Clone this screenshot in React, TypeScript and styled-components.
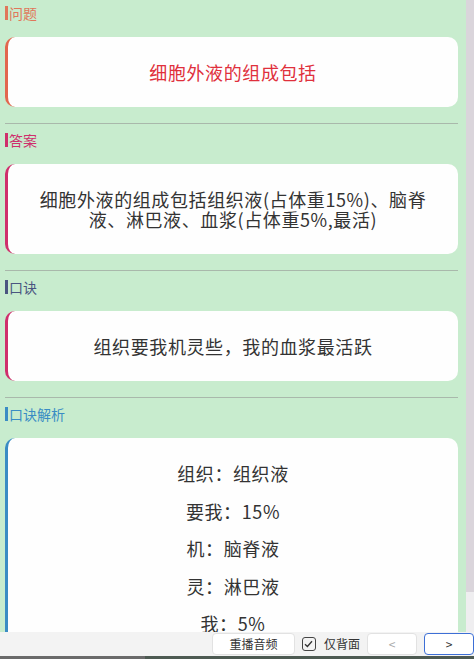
import React from 'react'
import styled, { createGlobalStyle } from 'styled-components'

const GlobalStyle = createGlobalStyle`
  html, body {
    margin: 0;
    padding: 0;
    height: 100%;
    overflow: hidden;
  }
  body {
    font-family: "Noto Sans CJK SC", "Noto Sans", sans-serif;
  }
`

const Page = styled.div`
  display: flex;
  flex-direction: column;
  width: 474px;
  height: 659px;
  background: #c8ecce;
`

const Viewport = styled.div`
  flex: 1;
  min-height: 0;
  display: flex;
`

const Scroller = styled.div`
  flex: 1;
  min-width: 0;
  overflow: hidden;
  padding-top: 3px;
`

const ScrollTrack = styled.div`
  width: 8px;
  background: #efeef0;
  display: flex;
  flex-direction: column;
`

const ScrollThumb = styled.div<{ $ratio: number }>`
  height: ${(p) => p.$ratio * 100}%;
  background: #dad5db;
`

const Section = styled.section`
  margin: 0 8px 0 5px;
`

const Heading = styled.div<{ $color: string }>`
  height: 20px;
  display: flex;
  align-items: center;
  margin-bottom: 14px;

  span {
    display: inline-block;
    border-left: 3px solid ${(p) => p.$color};
    padding-left: 1px;
    line-height: 14px;
    font-size: 14px;
    color: ${(p) => p.$color};
  }
`

const Card = styled.div<{ $stripe: string; $color?: string }>`
  background: #fefefe;
  border-radius: 10px;
  border-left: 3px solid ${(p) => p.$stripe};
  padding: 25px 30px;
  text-align: center;
  font-size: 18px;
  line-height: 20px;
  color: ${(p) => p.$color || '#333'};
  letter-spacing: 0.6px;
`

const Divider = styled.hr`
  border: none;
  border-top: 1px solid #a9b8ab;
  margin: 16px 0 6px;
`

const Line = styled.p`
  margin: 0 0 17.5px;
  &:last-child {
    margin-bottom: 0;
  }
`

const Toolbar = styled.div`
  flex: none;
  height: 24px;
  background: #f3f3f3;
  display: flex;
  align-items: center;
  justify-content: flex-end;
  gap: 7px;
  font-size: 12px;
  color: #333;
`

const Button = styled.button<{ $focused?: boolean; $w: number; $dim?: boolean }>`
  width: ${(p) => p.$w}px;
  height: 22px;
  background: #fff;
  border: 1px solid ${(p) => (p.$focused ? '#3d6fd6' : '#e2e2e2')};
  border-radius: 4px;
  font-family: "Noto Sans CJK SC", sans-serif;
  font-size: 12px;
  line-height: 20px;
  color: ${(p) => (p.$dim ? '#aaa' : '#333')};
  padding: 0;
`

const Check = styled.label`
  display: flex;
  align-items: center;
  gap: 8px;
  line-height: 16px;

  i {
    width: 12px;
    height: 12px;
    border: 1.5px solid #444;
    border-radius: 3px;
    display: flex;
    align-items: center;
    justify-content: center;
  }
`

const BottomStrip = styled.div`
  flex: none;
  height: 3px;
  background: linear-gradient(90deg, #6a6a6a 0 145px, #4d5a52 145px);
`

const App: React.FC = () => {
  return (
    <>
      <GlobalStyle />
      <Page>
        <Viewport>
          <Scroller>
            <Section>
              <Heading $color="#e0775a"><span>问题</span></Heading>
              <Card $stripe="#e2674e" $color="#e0303c">细胞外液的组成包括</Card>
              <Divider />
            </Section>
            <Section>
              <Heading $color="#cf2f6c"><span>答案</span></Heading>
              <Card $stripe="#cf2f6c">细胞外液的组成包括组织液(占体重15%)、脑脊液、淋巴液、血浆(占体重5%,最活)</Card>
              <Divider />
            </Section>
            <Section>
              <Heading $color="#4a5580"><span>口诀</span></Heading>
              <Card $stripe="#cf2f6c">组织要我机灵些，我的血浆最活跃</Card>
              <Divider />
            </Section>
            <Section>
              <Heading $color="#3a8cc4"><span>口诀解析</span></Heading>
              <Card $stripe="#3a8cc4">
                <Line>组织：组织液</Line>
                <Line>要我：15%</Line>
                <Line>机：脑脊液</Line>
                <Line>灵：淋巴液</Line>
                <Line>我：5%</Line>
              </Card>
            </Section>
          </Scroller>
          <ScrollTrack>
            <ScrollThumb $ratio={0.937} />
          </ScrollTrack>
        </Viewport>
        <Toolbar>
          <Button $w={83}>重播音频</Button>
          <Check>
            <i>
              <svg width="9" height="8" viewBox="0 0 9 8">
                <path d="M1 4.2 L3.4 6.5 L8 1.3" fill="none" stroke="#333" strokeWidth="1.3" />
              </svg>
            </i>
            仅背面
          </Check>
          <Button $w={50} $dim>&lt;</Button>
          <Button $w={50} $focused>&gt;</Button>
        </Toolbar>
        <BottomStrip />
      </Page>
    </>
  )
}

export default App
